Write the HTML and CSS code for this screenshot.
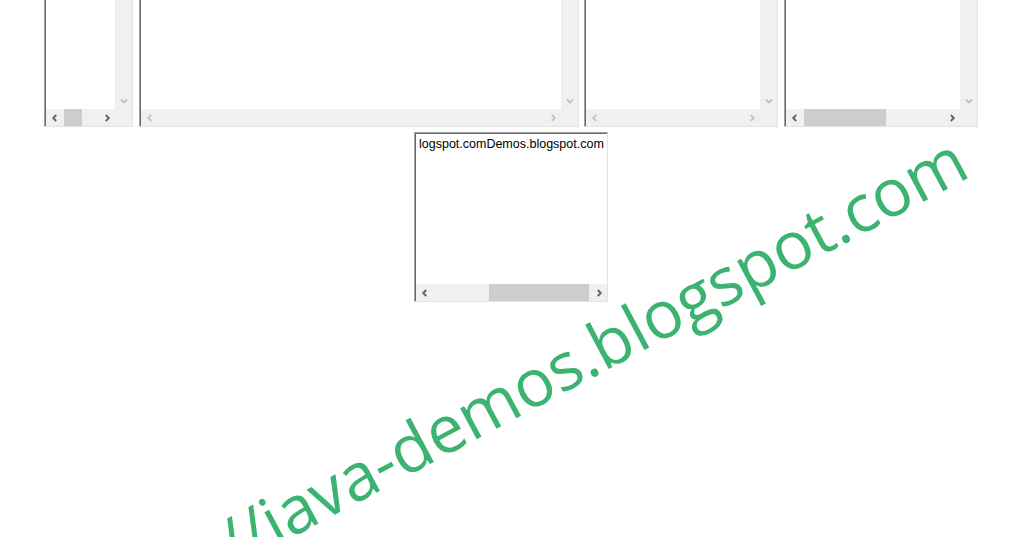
FILE: index.html
```html
<!DOCTYPE html>
<html>
<head>
<meta charset="utf-8">
<link rel="stylesheet" href="styles.css">
</head>
<body>
<div class="row top">
  <div class="sp w89">
    <div class="in both">
      <div class="view"></div>
      <div class="vbar"><div class="vtrack"></div><div class="btn"><svg class="ar off" viewBox="0 0 8 8"><path d="M1 2.5 L4 5.5 L7 2.5"/></svg></div></div>
      <div class="hbar"><div class="btn"><svg class="ar" viewBox="0 0 8 8"><path d="M5.2 1 L2.2 4 L5.2 7"/></svg></div><div class="track"><div class="thumb" style="margin-left:1px;width:18px"></div></div><div class="btn"><svg class="ar" viewBox="0 0 8 8"><path d="M2.8 1 L5.8 4 L2.8 7"/></svg></div></div>
      <div class="corner"></div>
    </div>
  </div>
  <div class="sp w440">
    <div class="in both">
      <div class="view"></div>
      <div class="vbar"><div class="vtrack"></div><div class="btn"><svg class="ar off" viewBox="0 0 8 8"><path d="M1 2.5 L4 5.5 L7 2.5"/></svg></div></div>
      <div class="hbar"><div class="btn"><svg class="ar off" viewBox="0 0 8 8"><path d="M5.2 1 L2.2 4 L5.2 7"/></svg></div><div class="track"></div><div class="btn"><svg class="ar off" viewBox="0 0 8 8"><path d="M2.8 1 L5.8 4 L2.8 7"/></svg></div></div>
      <div class="corner"></div>
    </div>
  </div>
  <div class="sp w194 third">
    <div class="in both">
      <div class="view"></div>
      <div class="vbar"><div class="vtrack"></div><div class="btn"><svg class="ar off" viewBox="0 0 8 8"><path d="M1 2.5 L4 5.5 L7 2.5"/></svg></div></div>
      <div class="hbar"><div class="btn"><svg class="ar off" viewBox="0 0 8 8"><path d="M5.2 1 L2.2 4 L5.2 7"/></svg></div><div class="track"></div><div class="btn"><svg class="ar off" viewBox="0 0 8 8"><path d="M2.8 1 L5.8 4 L2.8 7"/></svg></div></div>
      <div class="corner"></div>
    </div>
  </div>
  <div class="sp w194">
    <div class="in both">
      <div class="view"></div>
      <div class="vbar"><div class="vtrack"></div><div class="btn"><svg class="ar off" viewBox="0 0 8 8"><path d="M1 2.5 L4 5.5 L7 2.5"/></svg></div></div>
      <div class="hbar"><div class="btn"><svg class="ar" viewBox="0 0 8 8"><path d="M5.2 1 L2.2 4 L5.2 7"/></svg></div><div class="track"><div class="thumb" style="margin-left:1px;width:82px"></div></div><div class="btn"><svg class="ar" viewBox="0 0 8 8"><path d="M2.8 1 L5.8 4 L2.8 7"/></svg></div></div>
      <div class="corner"></div>
    </div>
  </div>
</div>
<div class="row mid">
  <div class="sp w194 h170">
    <div class="in honly">
      <div class="view text">logspot.comDemos.blogspot.com</div>
      <div class="hbar"><div class="btn"><svg class="ar" viewBox="0 0 8 8"><path d="M5.2 1 L2.2 4 L5.2 7"/></svg></div><div class="track"><div class="thumb" style="margin-left:56px;width:100px"></div></div><div class="btn"><svg class="ar" viewBox="0 0 8 8"><path d="M2.8 1 L5.8 4 L2.8 7"/></svg></div></div>
    </div>
  </div>
</div>
<div class="wm"><span class="pre">http://</span>java-demos.blogspot.com</div>
</body>
</html>
```
FILE: styles.css
```css
html, body {
  margin: 0;
  padding: 0;
  background: #ffffff;
  overflow: hidden;
}
body {
  width: 1024px;
  height: 537px;
  position: relative;
  font-family: "Liberation Sans", Arial, sans-serif;
}
.row {
  display: flex;
}
.row.top {
  padding-left: 44px;
  gap: 6px;
  margin-top: -13px;
  height: 140px;
}
.row.top .third {
  margin-left: -1px;
}
.row.mid {
  margin-top: 5px;
  padding-left: 414px;
}
.sp {
  box-sizing: border-box;
  border-style: solid;
  border-width: 1px;
  border-color: #a0a0a0 #e3e3e3 #e3e3e3 #a0a0a0;
  height: 140px;
  background: #ffffff;
}
.w89 { width: 89px; }
.w440 { width: 440px; }
.w194 { width: 194px; }
.h170 { height: 170px; }
.in {
  height: 100%;
  box-sizing: border-box;
  border-top: 1px solid #696969;
  border-left: 1px solid #696969;
  display: grid;
}
.in.both {
  grid-template-columns: 1fr 17px;
  grid-template-rows: 1fr 17px;
}
.in.honly {
  grid-template-columns: 1fr;
  grid-template-rows: 1fr 17px;
}
.view {
  background: #ffffff;
  overflow: hidden;
  min-width: 0;
}
.text {
  font-family: "Liberation Sans", Arial, sans-serif;
  font-size: 12.5px;
  line-height: 15px;
  color: #000000;
  padding: 3px 0 0 3px;
  white-space: nowrap;
}
.vbar {
  background: #f0f0f0;
  display: flex;
  flex-direction: column;
}
.vtrack {
  flex: 1;
}
.hbar {
  background: #f0f0f0;
  display: flex;
  min-width: 0;
}
.track {
  flex: 1;
  display: flex;
  min-width: 0;
}
.thumb {
  background: #cdcdcd;
  height: 100%;
}
.btn {
  width: 17px;
  height: 17px;
  flex: 0 0 17px;
  display: flex;
  align-items: center;
  justify-content: center;
}
.corner {
  background: #f0f0f0;
}
.ar {
  width: 8px;
  height: 8px;
  fill: none;
  stroke: #606060;
  stroke-width: 1.8;
}
.ar.off {
  stroke: #c2c2c2;
}
.wm {
  position: absolute;
  left: 276px;
  top: 487px;
  font-family: "Open Sans", "Noto Sans", sans-serif;
  font-size: 66px;
  font-weight: 500;
  line-height: 66px;
  color: #3cb371;
  white-space: nowrap;
  transform-origin: 0 59px;
  transform: rotate(-28deg);
}
.pre {
  position: absolute;
  right: 100%;
  top: 0;
}
```
